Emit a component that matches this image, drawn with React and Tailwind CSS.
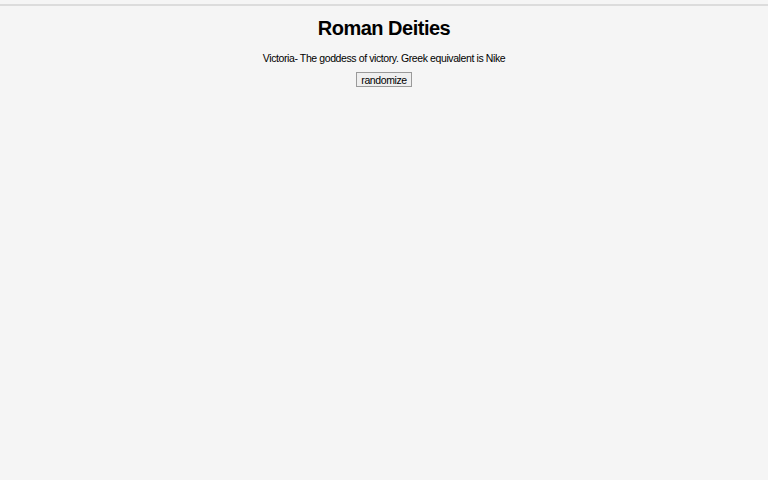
import React, { useState } from 'react';

const DEITIES = [
  'Victoria- The goddess of victory. Greek equivalent is Nike',
  'Jupiter- King of the gods. Greek equivalent is Zeus',
  'Neptune- God of the sea. Greek equivalent is Poseidon',
  'Minerva- Goddess of wisdom. Greek equivalent is Athena',
];

export default function App() {
  const [idx, setIdx] = useState(0);

  return (
    <div className="min-h-screen bg-[#f5f5f5] pt-1 font-['Liberation_Sans',Arial,sans-serif] text-black">
      <div className="border-t-2 border-[#dcdcdc]" />
      <div className="flex flex-col items-center">
        <h1 className="mt-[10px] text-[20px] font-bold leading-6 tracking-[-0.5px]">Roman Deities</h1>
        <p className="mt-[10px] text-[10.5px] leading-4 tracking-[-0.4px]">{DEITIES[idx]}</p>
        <button
          onClick={() => setIdx((idx + 1) % DEITIES.length)}
          className="mt-[6px] h-[15px] border border-[#9a9a9a] bg-[#efefef] px-[4px] text-[10.5px] leading-3 tracking-[-0.4px]"
        >
          randomize
        </button>
      </div>
    </div>
  );
}
